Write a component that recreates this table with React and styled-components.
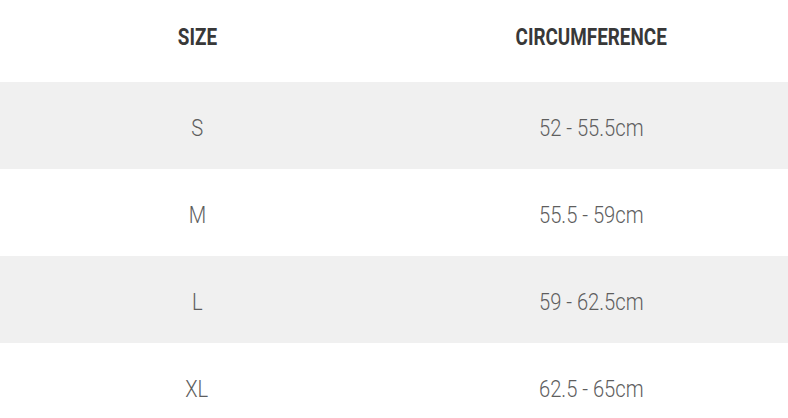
import React from "react";
import styled, { createGlobalStyle } from "styled-components";

const Global = createGlobalStyle`
  html, body { margin: 0; padding: 0; background: #fff; }
  body { font-family: "Roboto", "Liberation Sans", sans-serif; }
`;

const Table = styled.div`
  width: 788px;
  display: flex;
  flex-direction: column;
`;

const Row = styled.div`
  display: grid;
  grid-template-columns: 1fr 1fr;
  height: ${(p) => (p.$head ? 82 : 87)}px;
  align-items: center;
  background: ${(p) => (p.$shade ? "#f0f0f0" : "#fff")};
`;

const Cell = styled.div`
  display: flex;
  justify-content: center;
  padding: ${(p) => (p.$head ? "0 0 8px" : "5px 0 0")};
`;

const Label = styled.span`
  display: inline-block;
  white-space: nowrap;
  font-size: ${(p) => (p.$head ? 24.5 : 24)}px;
  line-height: 1;
  font-weight: ${(p) => (p.$head ? 700 : 300)};
  color: ${(p) => (p.$head ? "#383838" : "#5e5e5e")};
  transform: scaleX(${(p) => (p.$head ? 0.77 : 0.84)});
`;

const rows = [
  ["S", "52 - 55.5cm"],
  ["M", "55.5 - 59cm"],
  ["L", "59 - 62.5cm"],
  ["XL", "62.5 - 65cm"],
];

export default function App() {
  return (
    <>
      <Global />
      <Table>
        <Row $head>
          <Cell $head><Label $head>SIZE</Label></Cell>
          <Cell $head><Label $head>CIRCUMFERENCE</Label></Cell>
        </Row>
        {rows.map(([s, c], i) => (
          <Row key={s} $shade={i % 2 === 0}>
            <Cell><Label>{s}</Label></Cell>
            <Cell><Label>{c}</Label></Cell>
          </Row>
        ))}
      </Table>
    </>
  );
}
